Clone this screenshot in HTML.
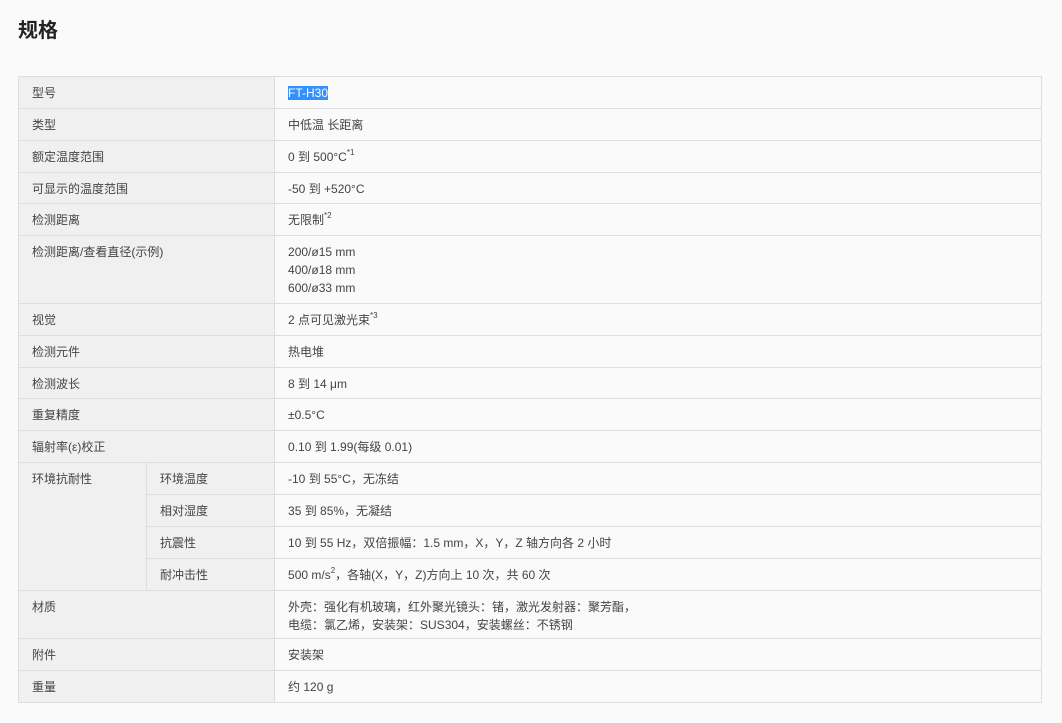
<!DOCTYPE html>
<html><head><meta charset="utf-8">
<style>
html,body{margin:0;padding:0;background:#fafafa;}
body{width:1062px;height:723px;overflow:hidden;font-family:"Liberation Sans","Noto Sans CJK SC",sans-serif;color:#444;}
h2{position:absolute;left:18px;top:16px;margin:0;font-size:20px;font-weight:bold;color:#222;line-height:30px;}
table{position:absolute;left:18px;top:76px;width:1023px;border-collapse:collapse;table-layout:fixed;font-size:12px;}
td{border:1px solid #ddd;padding:7px 13px 0 13px;vertical-align:top;line-height:18px;box-sizing:border-box;}
td.h{background:#f0f0f0;}
td.v{background:#fafafa;}
tr{height:32px;}
sup{font-size:8px;line-height:0;vertical-align:6px;}
.sel{background:#3390ff;color:#fff;}
</style></head><body>
<h2>规格</h2>
<table>
<colgroup><col style="width:128px"><col style="width:128px"><col style="width:767px"></colgroup>
<tr><td class="h" colspan="2">型号</td><td class="v"><span class="sel">FT-H30</span></td></tr>
<tr><td class="h" colspan="2">类型</td><td class="v">中低温 长距离</td></tr>
<tr><td class="h" colspan="2">额定温度范围</td><td class="v">0 到 500°C<sup>*1</sup></td></tr>
<tr style="height:31px"><td class="h" colspan="2">可显示的温度范围</td><td class="v">-50 到 +520°C</td></tr>
<tr><td class="h" colspan="2">检测距离</td><td class="v">无限制<sup>*2</sup></td></tr>
<tr style="height:68px"><td class="h" colspan="2">检测距离/查看直径(示例)</td><td class="v">200/ø15 mm<br>400/ø18 mm<br>600/ø33 mm</td></tr>
<tr><td class="h" colspan="2">视觉</td><td class="v">2 点可见激光束<sup>*3</sup></td></tr>
<tr><td class="h" colspan="2">检测元件</td><td class="v">热电堆</td></tr>
<tr style="height:31px"><td class="h" colspan="2">检测波长</td><td class="v">8 到 14 μm</td></tr>
<tr><td class="h" colspan="2">重复精度</td><td class="v">±0.5°C</td></tr>
<tr><td class="h" colspan="2">辐射率(ε)校正</td><td class="v">0.10 到 1.99(每级 0.01)</td></tr>
<tr><td class="h" rowspan="4">环境抗耐性</td><td class="h">环境温度</td><td class="v">-10 到 55°C，无冻结</td></tr>
<tr><td class="h">相对湿度</td><td class="v">35 到 85%，无凝结</td></tr>
<tr><td class="h">抗震性</td><td class="v">10 到 55 Hz，双倍振幅：1.5 mm，X，Y，Z 轴方向各 2 小时</td></tr>
<tr><td class="h">耐冲击性</td><td class="v">500 m/s<sup>2</sup>，各轴(X，Y，Z)方向上 10 次，共 60 次</td></tr>
<tr style="height:48px"><td class="h" colspan="2">材质</td><td class="v">外壳：强化有机玻璃，红外聚光镜头：锗，激光发射器：聚芳酯，<br>电缆：氯乙烯，安装架：SUS304，安装螺丝：不锈钢</td></tr>
<tr><td class="h" colspan="2">附件</td><td class="v">安装架</td></tr>
<tr><td class="h" colspan="2">重量</td><td class="v">约 120 g</td></tr>
</table>
</body></html>
